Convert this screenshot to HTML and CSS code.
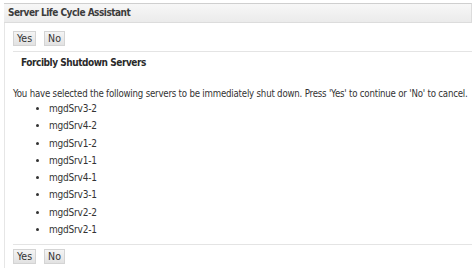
FILE: index.html
```html
<!DOCTYPE html>
<html>
<head>
<meta charset="utf-8">
<link rel="stylesheet" href="styles.css">
</head>
<body>
<div class="panel">
  <div class="header">Server Life Cycle Assistant</div>
  <div class="content">
    <div class="buttons top">
      <button class="btn">Yes</button>
      <button class="btn">No</button>
    </div>
    <div class="sep"></div>
    <h2 class="title">Forcibly Shutdown Servers</h2>
    <p class="msg">You have selected the following servers to be immediately shut down. Press 'Yes' to continue or 'No' to cancel.</p>
    <ul class="servers">
      <li>mgdSrv3-2</li>
      <li>mgdSrv4-2</li>
      <li>mgdSrv1-2</li>
      <li>mgdSrv1-1</li>
      <li>mgdSrv4-1</li>
      <li>mgdSrv3-1</li>
      <li>mgdSrv2-2</li>
      <li>mgdSrv2-1</li>
    </ul>
    <div class="sep lower"></div>
    <div class="buttons bottom">
      <button class="btn">Yes</button>
      <button class="btn">No</button>
    </div>
  </div>
</div>
</body>
</html>
```
FILE: styles.css
```css
html, body {
  margin: 0;
  padding: 0;
  background: #fff;
}
body {
  font-family: "DejaVu Sans Condensed", "DejaVu Sans", sans-serif;
  font-size: 9.6px;
  letter-spacing: -0.2px;
  color: #333;
}
.panel {
  margin: 3px 2px 0 4px;
  border-left: 1px solid #e6e6e6;
  height: 265px;
}
.header {
  height: 18px;
  line-height: 18px;
  padding-left: 4px;
  font-weight: bold;
  font-size: 10px;
  letter-spacing: -0.5px;
  color: #3c3c3c;
  background: linear-gradient(#f7f7f7, #ebebeb);
  border-top: 1px solid #cfcfcf;
  border-bottom: 1px solid #dcdcdc;
  border-right: 1px solid #dcdcdc;
  margin-left: -1px;
}
.content {
  padding-left: 8px;
}
.buttons {
  display: flex;
  gap: 8px;
}
.buttons.top {
  margin-top: 8px;
}
.buttons.bottom {
  margin-top: 4px;
}
.btn {
  font-family: inherit;
  font-size: 10.5px;
  letter-spacing: 0;
  color: #333;
  height: 15px;
  padding: 0 3px;
  border: 1px solid #d4d4d4;
  background: linear-gradient(#f4f4f4, #e2e2e2);
  line-height: 13px;
  margin: 0;
}
.sep {
  height: 1px;
  background: #e4e4e4;
  margin-top: 5px;
}
.sep.lower {
  margin-top: 6px;
}
.title {
  margin: 4px 0 0 8px;
  font-size: 10px;
  letter-spacing: -0.45px;
  font-weight: bold;
  line-height: 14px;
  color: #2a2a2a;
}
.msg {
  margin: 17px 0 0 0;
  line-height: 14px;
  white-space: nowrap;
}
.servers {
  margin: -1px 0 0 0;
  padding-left: 36px;
  line-height: 17.3px;
  font-size: 10px;
  letter-spacing: -0.2px;
}
```
